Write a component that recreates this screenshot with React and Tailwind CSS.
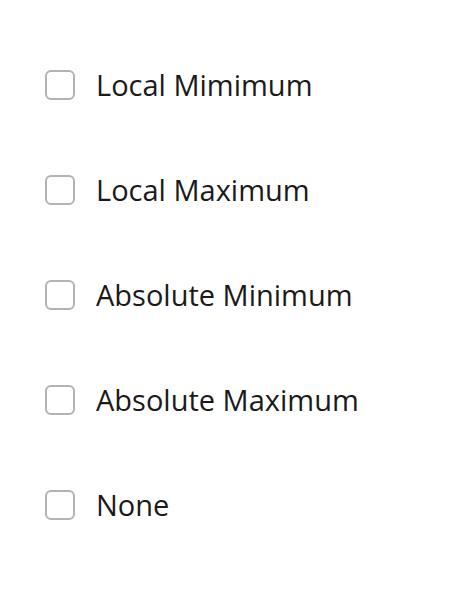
export default function App() {
  const options = ['Local Mimimum', 'Local Maximum', 'Absolute Minimum', 'Absolute Maximum', 'None'];
  return (
    <div className="w-[474px] h-[603px] bg-white pt-[32px] pl-[45px]" style={{ fontFamily: '"Open Sans", sans-serif' }}>
      <div className="flex flex-col">
        {options.map((o) => (
          <label key={o} className="flex items-center h-[105px] gap-[21px]">
            <span className="w-[30px] h-[30px] rounded-[6px] border-2 border-[#b3b3b3] bg-white flex-shrink-0" />
            <span className="text-[29px] text-[#1a1a1a] leading-none">{o}</span>
          </label>
        ))}
      </div>
    </div>
  );
}
